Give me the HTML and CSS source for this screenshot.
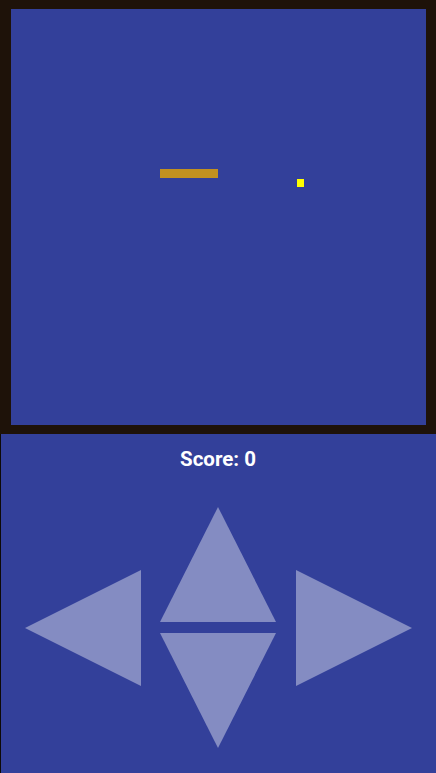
FILE: index.html
```html
<!DOCTYPE html>
<html lang="en">
<head>
  <meta charset="UTF-8">
  <title>Snake</title>
  <link rel="stylesheet" href="styles.css">
</head>
<body>
  <div class="board-frame">
    <div class="board">
      <div class="snake" style="left: 149px; top: 160px; width: 58px;"></div>
      <div class="food" style="left: 286px; top: 170px;"></div>
    </div>
  </div>

  <div class="panel">
    <div class="score">Score: <span id="score">0</span></div>

    <div class="controls">
      <button class="pad side" id="left" aria-label="Left">
        <svg viewBox="0 0 116 116"><polygon points="0,58 116,0 116,116" /></svg>
      </button>
      <div class="middle">
        <button class="pad" id="up" aria-label="Up">
          <svg viewBox="0 0 116 115"><polygon points="58,0 116,115 0,115" /></svg>
        </button>
        <button class="pad" id="down" aria-label="Down">
          <svg viewBox="0 0 116 115"><polygon points="0,0 116,0 58,115" /></svg>
        </button>
      </div>
      <button class="pad side" id="right" aria-label="Right">
        <svg viewBox="0 0 116 116"><polygon points="0,0 116,58 0,116" /></svg>
      </button>
    </div>
  </div>
</body>
</html>
```

FILE: styles.css
```css
body {
  margin: 0;
  background: #0e0a07;
  font-family: Roboto, 'Liberation Sans', Arial, sans-serif;
  width: 436px;
  height: 773px;
  overflow: hidden;
}

.board-frame {
  background: #1e1209;
  padding: 9px 10px 9px 11px;
}

.board {
  position: relative;
  height: 416px;
  background: #33409a;
}

.snake {
  position: absolute;
  height: 9px;
  background: #c29120;
}

.food {
  position: absolute;
  width: 7px;
  height: 8px;
  background: #ffff00;
}

.panel {
  margin-left: 1px;
  height: 339px;
  background: #33409a;
  color: #fff;
}

.score {
  padding-top: 13px;
  text-align: center;
  font-size: 20.5px;
  font-weight: 700;
  line-height: 24px;
  margin-left: -1px;
}

.controls {
  display: flex;
  align-items: center;
  gap: 19px;
  padding-left: 24px;
  margin-top: 36px;
}

.middle {
  display: flex;
  flex-direction: column;
  gap: 11px;
  margin-right: 1px;
}

.pad {
  background: none;
  border: none;
  padding: 0;
  cursor: pointer;
  display: block;
}

.pad svg {
  display: block;
  width: 116px;
  height: 115px;
}

.side svg {
  height: 116px;
}

.pad polygon {
  fill: rgba(255, 255, 255, 0.4);
}
```
